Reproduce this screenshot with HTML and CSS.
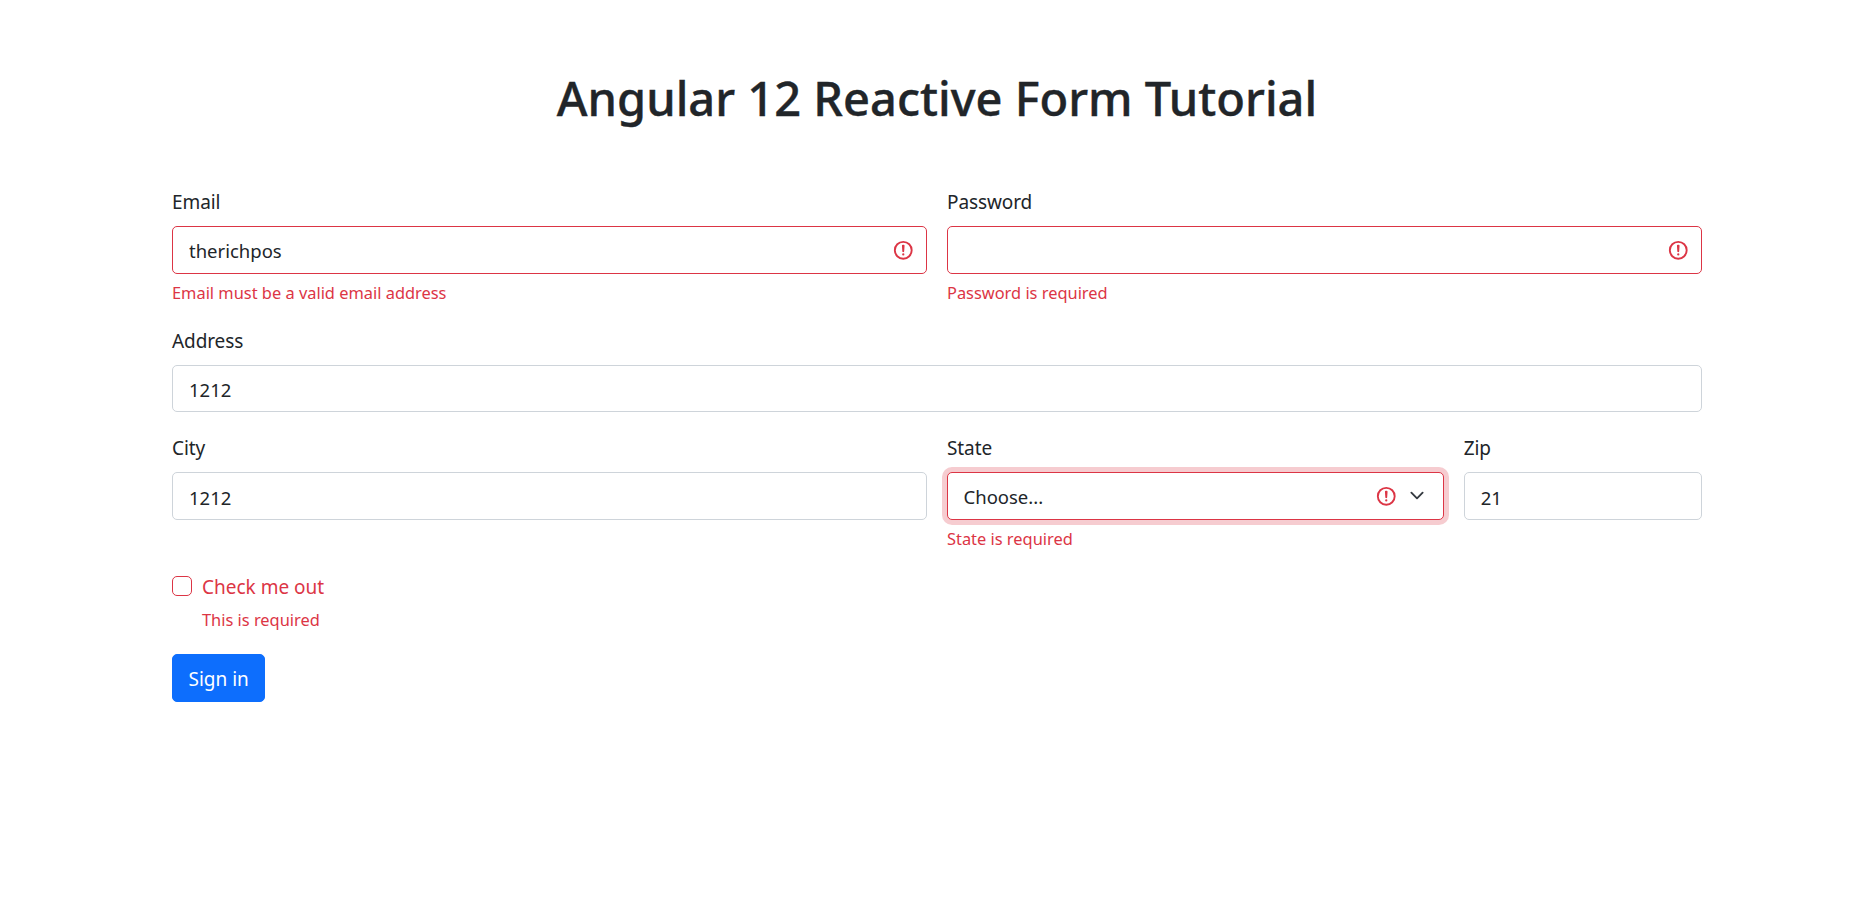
FILE: index.html
```html
<!DOCTYPE html>
<html lang="en">
<head>
<meta charset="utf-8">
<title>Angular 12 Reactive Form Tutorial</title>
<link rel="stylesheet" href="styles.css">
</head>
<body>
<main class="page">
  <h1 class="title">Angular 12 Reactive Form Tutorial</h1>
  <form class="form">
    <div class="field span-6">
      <label class="label">Email</label>
      <div class="control">
        <input class="input invalid" type="text" value="therichpos">
        <svg class="icon-invalid" viewBox="0 0 12 12" fill="none" stroke="#dc3545"><circle cx="6" cy="6" r="4.5"/><path stroke-linejoin="round" d="M5.8 3.6h.4L6 6.5z"/><circle cx="6" cy="8.2" r=".6" fill="#dc3545" stroke="none"/></svg>
      </div>
      <div class="error">Email must be a valid email address</div>
    </div>
    <div class="field span-6">
      <label class="label">Password</label>
      <div class="control">
        <input class="input invalid" type="text" value="">
        <svg class="icon-invalid" viewBox="0 0 12 12" fill="none" stroke="#dc3545"><circle cx="6" cy="6" r="4.5"/><path stroke-linejoin="round" d="M5.8 3.6h.4L6 6.5z"/><circle cx="6" cy="8.2" r=".6" fill="#dc3545" stroke="none"/></svg>
      </div>
      <div class="error">Password is required</div>
    </div>
    <div class="field span-12">
      <label class="label">Address</label>
      <div class="control"><input class="input" type="text" value="1212"></div>
    </div>
    <div class="field span-6">
      <label class="label">City</label>
      <div class="control"><input class="input" type="text" value="1212"></div>
    </div>
    <div class="field span-4">
      <label class="label">State</label>
      <div class="control">
        <select class="input invalid focused"><option>Choose...</option></select>
        <svg class="icon-invalid in-select" viewBox="0 0 12 12" fill="none" stroke="#dc3545"><circle cx="6" cy="6" r="4.5"/><path stroke-linejoin="round" d="M5.8 3.6h.4L6 6.5z"/><circle cx="6" cy="8.2" r=".6" fill="#dc3545" stroke="none"/></svg>
        <svg class="icon-chevron" viewBox="0 0 16 16" fill="none" stroke="#343a40" stroke-width="2" stroke-linecap="round" stroke-linejoin="round"><path d="m2 5 6 6 6-6"/></svg>
      </div>
      <div class="error">State is required</div>
    </div>
    <div class="field span-2">
      <label class="label">Zip</label>
      <div class="control"><input class="input" type="text" value="21"></div>
    </div>
    <div class="field span-12 check">
      <div class="check-row">
        <span class="checkbox"></span>
        <label class="check-label">Check me out</label>
      </div>
      <div class="error check-error">This is required</div>
    </div>
    <div class="field span-12">
      <button class="btn" type="button">Sign in</button>
    </div>
  </form>
</main>
</body>
</html>
```
FILE: styles.css
```css
* { box-sizing: border-box; }
html, body { margin: 0; background: #fff; }
body {
  font-family: "Noto Sans", "Open Sans", sans-serif;
  font-size: 19px;
  line-height: 30px;
  color: #212529;
}
.page { width: 1530px; margin-left: 172px; padding-top: 68px; }
.title {
  margin: 0 0 58px;
  font-size: 47px;
  line-height: 60px;
  font-weight: 500;
  -webkit-text-stroke: .4px #212529;
  text-align: center;
}
.form {
  display: grid;
  grid-template-columns: repeat(12, 1fr);
  column-gap: 20px;
  row-gap: 20px;
  align-items: start;
}
.span-2 { grid-column: span 2; }
.span-4 { grid-column: span 4; }
.span-6 { grid-column: span 6; }
.span-12 { grid-column: span 12; }
.label { display: block; padding-top: 1px; margin-bottom: 9px; letter-spacing: -.1px; }
.control { position: relative; }
.input {
  display: block;
  width: 100%;
  height: 47.5px;
  padding: 8.5px 16px 6.5px;
  border: 1px solid #ced4da;
  border-radius: 5px;
  background: #fff;
  font: inherit;
  font-size: 18.5px;
  color: #212529;
  outline: none;
  appearance: none;
}
.invalid { border-color: #dc3545; }
.focused { padding-left: 15.5px; box-shadow: 0 0 0 5px rgba(220, 53, 69, .25); }
.icon-invalid {
  position: absolute;
  top: 12.5px;
  right: 12.5px;
  width: 22.5px;
  height: 22.5px;
}
.icon-invalid.in-select { right: 46.5px; }
.icon-chevron {
  position: absolute;
  top: 16px;
  right: 16.5px;
  width: 20px;
  height: 15px;
}
.error {
  margin-top: 5px;
  padding-top: 1px;
  height: 26.25px;
  font-size: 16.4px;
  line-height: 26px;
  color: #dc3545;
}
.check-row { display: flex; align-items: flex-start; height: 30px; }
.checkbox {
  flex: none;
  width: 20px;
  height: 20px;
  margin-top: 5px;
  border: 1px solid #dc3545;
  border-radius: 5px;
  background: #fff;
}
.check-label { margin-left: 10px; padding-top: 1px; color: #dc3545; }
.check-error { margin-left: 30px; margin-bottom: 2px; }
.btn {
  display: block;
  height: 47.5px;
  padding: 7px 15.5px 5px;
  border: 1px solid #0d6efd;
  border-radius: 5px;
  background: #0d6efd;
  color: #fff;
  font: inherit;
}
```
